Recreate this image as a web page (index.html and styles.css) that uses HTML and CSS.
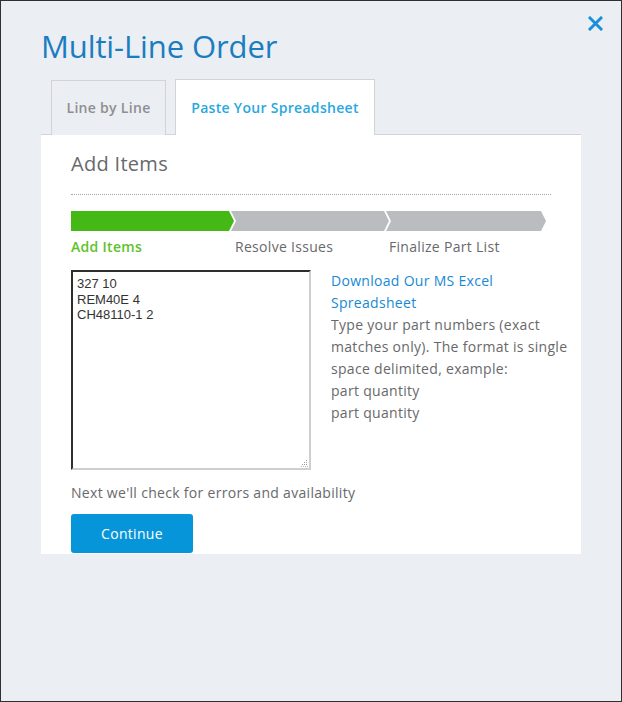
FILE: index.html
```html
<!DOCTYPE html>
<html>
<head>
<meta charset="utf-8">
<link rel="stylesheet" href="styles.css">
</head>
<body>
<div class="modal">
  <button class="close" aria-label="Close">
    <svg width="15" height="15" viewBox="0 0 15 15"><path d="M2 2 L13 13 M13 2 L2 13" stroke="#1a8fdb" stroke-width="3" stroke-linecap="square" fill="none"/></svg>
  </button>
  <h1 class="title">Multi-Line Order</h1>
  <div class="tabs">
    <div class="tab">Line by Line</div>
    <div class="tab active">Paste Your Spreadsheet</div>
  </div>
  <div class="panel">
    <h2 class="heading">Add Items</h2>
    <div class="divider"></div>
    <svg class="progress" width="475" height="20" viewBox="0 0 475 20">
      <polygon points="0,0 158,0 163,10 158,20 0,20" fill="#44b916"/>
      <polygon points="160,0 313,0 318,10 313,20 160,20 165,10" fill="#bbbcbf"/>
      <polygon points="315,0 470,0 475,10 470,20 315,20 320,10" fill="#bbbcbf"/>
    </svg>
    <div class="steps">
      <span class="step done">Add Items</span>
      <span class="step">Resolve Issues</span>
      <span class="step">Finalize Part List</span>
    </div>
    <div class="entry">
      <div class="field">
        <textarea class="parts">327 10
REM40E 4
CH48110-1 2</textarea>
        <svg class="grip" width="7" height="7" viewBox="0 0 7 7">
          <rect x="5" y="0" width="1" height="1" fill="#9a9a9a"/>
          <rect x="3" y="2" width="1" height="1" fill="#9a9a9a"/>
          <rect x="5" y="2" width="1" height="1" fill="#9a9a9a"/>
          <rect x="1" y="4" width="1" height="1" fill="#9a9a9a"/>
          <rect x="3" y="4" width="1" height="1" fill="#9a9a9a"/>
          <rect x="5" y="4" width="1" height="1" fill="#9a9a9a"/>
          <rect x="0" y="6" width="1" height="1" fill="#b5b5b5"/>
          <rect x="2" y="6" width="1" height="1" fill="#b5b5b5"/>
          <rect x="4" y="6" width="1" height="1" fill="#b5b5b5"/>
          <rect x="6" y="6" width="1" height="1" fill="#b5b5b5"/>
        </svg>
      </div>
      <div class="help">
        <a class="link" href="#">Download Our MS Excel Spreadsheet</a>
        <p>Type your part numbers (exact matches only). The format is single space delimited, example:<br>part quantity<br>part quantity</p>
      </div>
    </div>
    <p class="note">Next we'll check for errors and availability</p>
    <button class="continue">Continue</button>
  </div>
</div>
</body>
</html>
```

FILE: styles.css
```css
html, body {
  margin: 0;
  padding: 0;
}
body {
  background: #2f3033;
  width: 622px;
  height: 702px;
  padding: 1px;
  box-sizing: border-box;
  font-family: "Open Sans", "Liberation Sans", sans-serif;
}
.modal {
  position: relative;
  background: #ebeef3;
  width: 620px;
  height: 700px;
  box-sizing: border-box;
  padding: 0 40px;
  overflow: hidden;
}
.close {
  position: absolute;
  top: 15px;
  right: 18px;
  border: 0;
  padding: 0;
  background: none;
  line-height: 0;
}
.title {
  margin: 0;
  padding-top: 24px;
  font-size: 31px;
  font-weight: 400;
  line-height: 42px;
  color: #1a7dbf;
  letter-spacing: -0.1px;
}
.tabs {
  display: flex;
  align-items: flex-end;
  gap: 9px;
  margin-top: 12px;
  padding-left: 10px;
  height: 56px;
  position: relative;
  z-index: 1;
}
.tab {
  box-sizing: border-box;
  height: 55px;
  width: 115px;
  justify-content: center;
  border: 1px solid #d2d3d5;
  border-bottom: 0;
  background: #ebeef3;
  color: #8e8f92;
  font-size: 14px;
  font-weight: 600;
  letter-spacing: 0.3px;
  display: flex;
  align-items: center;
  padding-bottom: 2px;
}
.tab.active {
  height: 56px;
  width: 200px;
  background: #fff;
  color: #2aa8e0;
  padding-bottom: 0;
}
.panel {
  background: #fff;
  border-top: 1px solid #d2d3d5;
  margin-top: -1px;
  padding: 15px 30px 0;
  height: 420px;
  box-sizing: border-box;
}
.heading {
  margin: 0;
  font-size: 20px;
  font-weight: 400;
  line-height: 28px;
  color: #68696b;
  letter-spacing: 0.3px;
}
.divider {
  margin-top: 16px;
  border-top: 1px dotted #a6a7a9;
}
.progress {
  display: block;
  margin-top: 16px;
}
.steps {
  display: grid;
  grid-template-columns: 164px 154px auto;
  margin-top: 5px;
  font-size: 14px;
  line-height: 22px;
  color: #68696b;
  letter-spacing: 0.3px;
}
.step.done {
  color: #5ec22a;
  font-weight: 600;
}
.entry {
  display: grid;
  grid-template-columns: 240px 240px;
  gap: 20px;
  margin-top: 12px;
}
.field {
  position: relative;
  width: 240px;
  height: 200px;
}
.parts {
  display: block;
  box-sizing: border-box;
  width: 240px;
  height: 200px;
  margin: 0;
  border: 2px solid;
  border-color: #2e2e2e #cfcfcf #cfcfcf #2e2e2e;
  padding: 4px 4px;
  font-family: "Liberation Sans", Arial, sans-serif;
  font-size: 13px;
  line-height: 15.5px;
  color: #333;
  resize: none;
  background: #fff;
  outline: none;
}
.grip {
  position: absolute;
  right: 3px;
  bottom: 3px;
}
.help {
  font-size: 14px;
  line-height: 22px;
  color: #68696b;
  letter-spacing: 0.3px;
}
.help p {
  margin: 0;
}
.link {
  color: #1889d3;
  text-decoration: none;
}
.note {
  margin: 12px 0 0;
  font-size: 14px;
  line-height: 22px;
  color: #68696b;
  letter-spacing: 0.3px;
}
.continue {
  margin-top: 10px;
  width: 122px;
  height: 39px;
  border: 0;
  border-radius: 3px;
  background: #0795d9;
  color: #fff;
  font-family: "Open Sans", "Liberation Sans", sans-serif;
  font-size: 14px;
  letter-spacing: 0.3px;
  padding: 0;
}
```
